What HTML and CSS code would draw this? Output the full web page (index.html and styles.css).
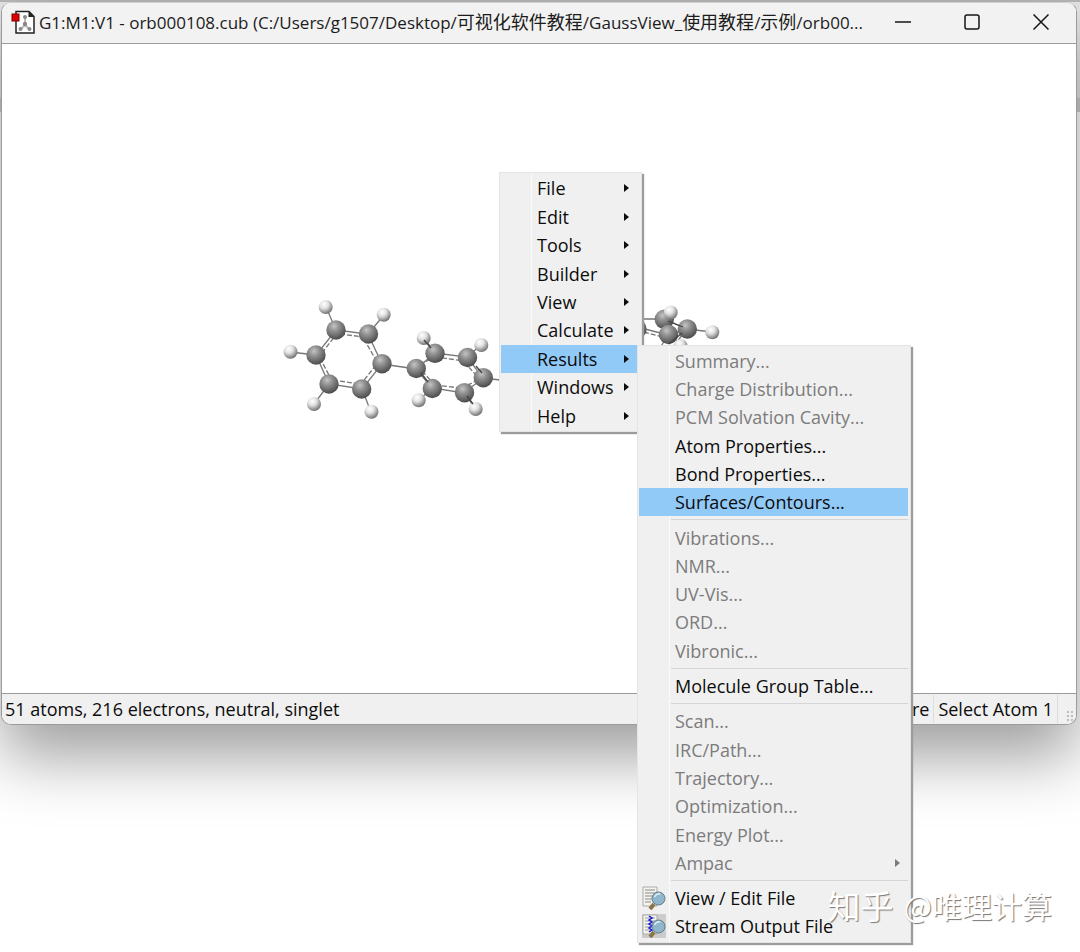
FILE: index.html
```html
<!DOCTYPE html>
<html lang="zh-CN">
<head>
<meta charset="UTF-8">
<meta name="viewport" content="width=device-width, initial-scale=1.0">
<title>G1:M1:V1 - orb000108.cub</title>
<link rel="stylesheet" href="styles.css">
</head>
<body>
<div class="backdrop"></div>
<main class="window">
  <header class="titlebar">
    <svg class="app-icon" viewBox="0 0 24 24" width="24" height="24" aria-hidden="true">
      <path d="M5 1.500h13l5 5v16.500H5z" fill="#fff" stroke="#222" stroke-width="1.500"/>
      <path d="M17.500 1v6h5.500z" fill="#222"/>
      <path d="M14 7v8M14 15l-4 4M14 15l4 4" stroke="#bbb" stroke-width="2"/>
      <g fill="#888"><circle cx="14" cy="7" r="2"/><circle cx="14" cy="14" r="2.200"/><circle cx="9.500" cy="19" r="2"/><circle cx="18.500" cy="19" r="2"/></g>
      <rect x="1" y="4" width="7" height="7" fill="#e00000" stroke="#7a0000"/>
    </svg>
    <h1>G1:M1:V1 - orb000108.cub (C:/Users/g1507/Desktop/<span class="cjk">可视化软件教程</span>/GaussView_<span class="cjk">使用教程</span>/<span class="cjk">示例</span>/orb00...</h1>
    <div class="controls">
      <button type="button" aria-label="Minimize"><svg viewBox="0 0 16 16"><path d="M0 8h16"/></svg></button>
      <button type="button" aria-label="Maximize"><svg viewBox="0 0 16 16"><rect x="1" y="1" width="14" height="14" rx="2"/></svg></button>
      <button type="button" aria-label="Close"><svg viewBox="0 0 16 16"><path d="M.5.5l15 15M15.500.5l-15 15"/></svg></button>
    </div>
  </header>

  <svg class="canvas" viewBox="2 44 1074 649" role="img" aria-label="Molecule">
    <defs>
      <radialGradient id="carbon" cx=".4" cy=".3" r=".75">
        <stop offset="0" stop-color="#c4c4c4"/><stop offset=".35" stop-color="#919191"/><stop offset="1" stop-color="#444"/>
      </radialGradient>
      <radialGradient id="hydrogen" cx=".38" cy=".3" r=".75">
        <stop offset="0" stop-color="#fff"/><stop offset=".4" stop-color="#e2e2e2"/><stop offset="1" stop-color="#666"/>
      </radialGradient>
    </defs>
    <g class="bonds">
      <path d="M326 307L336 330M384 315L368 334M290 352L316 355M314 404L329 384M371 412L362 389"/>
      <path d="M336 330L368 334L382 364L362 389L329 384L316 355zM382 364L416 369"/>
      <path d="M416 369L435 353L467 357L483 378L464 393L432 388zM424 338L435 353M481 345L467 357M419 400L432 388M476 409L464 393M483 378L500 380"/>
      <path d="M636 319L664 319L687 329L712 332M641 328L668 335L687 329M671 312L664 319M681 343L668 335M664 319L668 335M668 335L660 348M687 329L672 348"/>
    </g>
    <g class="bonds dashed">
      <path d="M340 334L364 337M364 339L377 362M376 365L361 384M333 380L360 384M332 381L320 358M322 353L335 336"/>
      <path d="M435 357L465 361M464 362L478 377M478 380L462 388M435 385L460 388M435 385L421 370M420 365L434 357M644 332L666 338"/>
    </g>
    <g fill="url(#hydrogen)">
      <circle cx="325.700" cy="307" r="7"/><circle cx="383.700" cy="314.700" r="7"/><circle cx="290.500" cy="351.700" r="7"/>
      <circle cx="314" cy="404" r="7"/><circle cx="371.500" cy="411.700" r="7"/><circle cx="423.700" cy="338" r="7"/>
      <circle cx="481.300" cy="345" r="7"/><circle cx="418.700" cy="400.300" r="7"/><circle cx="475.700" cy="409" r="7"/>
      <circle cx="712.300" cy="332.300" r="7"/>
    </g>
    <g fill="url(#carbon)">
      <circle cx="336" cy="330" r="9.700"/><circle cx="368.500" cy="334" r="9.700"/><circle cx="316" cy="355" r="9.700"/>
      <circle cx="382" cy="363.700" r="9.700"/><circle cx="329" cy="384" r="9.700"/><circle cx="361.700" cy="389" r="9.700"/>
      <circle cx="416.300" cy="368.500" r="9.700"/><circle cx="435" cy="353.300" r="9.700"/><circle cx="467.500" cy="357.500" r="9.700"/>
      <circle cx="483.300" cy="377.700" r="9.700"/><circle cx="432.300" cy="388.500" r="9.700"/><circle cx="464.500" cy="392.700" r="9.700"/>
      <circle cx="637" cy="329" r="9.700"/><circle cx="664.300" cy="319.300" r="9.700"/><circle cx="668.500" cy="334.500" r="9.700"/>
      <circle cx="687.300" cy="329" r="9.700"/>
    </g>
    <g fill="url(#hydrogen)"><circle cx="670.700" cy="312.500" r="7"/><circle cx="680.700" cy="346" r="7"/></g>
    <path class="near-bond" d="M668 321L683 327M669 344L682 333"/>
    <path class="near-bond" d="M476 366L482 373M424 340L431 348M467 396L473 404M421 373L428 382"/>
  </svg>

  <footer class="statusbar">
    <span class="summary">51 atoms, 216 electrons, neutral, singlet</span>
    <span class="pane">re</span>
    <span class="pane">Select Atom 1</span>
    <svg class="grip" viewBox="0 0 10 10" width="10" height="10" aria-hidden="true"><path d="M7 0h2v2H7zM3 4h2v2H3zM7 4h2v2H7zM3 8h2v2H3zM7 8h2v2H7zM3 0h2v2H3z"/></svg>
  </footer>
</main>

<ul class="menu main-menu">
  <li><button type="button" class="parent">File</button></li>
  <li><button type="button" class="parent">Edit</button></li>
  <li><button type="button" class="parent">Tools</button></li>
  <li><button type="button" class="parent">Builder</button></li>
  <li><button type="button" class="parent">View</button></li>
  <li><button type="button" class="parent">Calculate</button></li>
  <li class="open">
    <button type="button" class="parent active" aria-expanded="true">Results</button>
    <ul class="menu submenu">
      <li><button type="button" disabled>Summary...</button></li>
      <li><button type="button" disabled>Charge Distribution...</button></li>
      <li><button type="button" disabled>PCM Solvation Cavity...</button></li>
      <li><button type="button">Atom Properties...</button></li>
      <li><button type="button">Bond Properties...</button></li>
      <li><button type="button" class="active">Surfaces/Contours...</button></li>
      <li class="separator" role="separator"></li>
      <li><button type="button" disabled>Vibrations...</button></li>
      <li><button type="button" disabled>NMR...</button></li>
      <li><button type="button" disabled>UV-Vis...</button></li>
      <li><button type="button" disabled>ORD...</button></li>
      <li><button type="button" disabled>Vibronic...</button></li>
      <li class="separator" role="separator"></li>
      <li><button type="button">Molecule Group Table...</button></li>
      <li class="separator" role="separator"></li>
      <li><button type="button" disabled>Scan...</button></li>
      <li><button type="button" disabled>IRC/Path...</button></li>
      <li><button type="button" disabled>Trajectory...</button></li>
      <li><button type="button" disabled>Optimization...</button></li>
      <li><button type="button" disabled>Energy Plot...</button></li>
      <li><button type="button" class="parent" disabled>Ampac</button></li>
      <li class="separator" role="separator"></li>
      <li><button type="button" class="with-icon">
        <svg class="item-icon" viewBox="0 0 24 24" aria-hidden="true">
          <path d="M1 1h14v19H1z" fill="#f4f4ee" stroke="#aaa"/>
          <path d="M3 4h10M3 7h10M3 10h8M3 13h7M3 16h6" stroke="#888"/>
          <path d="M12 18l-4 5" stroke="#8b7445" stroke-width="4"/>
          <circle cx="16.500" cy="12.500" r="6.500" fill="#8fb6ca" stroke="#687f8a"/>
          <path d="M12.500 11q2-4 6-3" fill="none" stroke="#d8edf5" stroke-width="1.500"/>
        </svg>View / Edit File</button></li>
      <li><button type="button" class="with-icon">
        <svg class="item-icon" viewBox="0 0 24 24" aria-hidden="true">
          <path d="M0 0h24v24H0z" fill="#ccc"/>
          <path d="M1 1h14v19H1z" fill="#f4f4ee" stroke="#aaa"/>
          <path d="M3 4h10M3 7h10M3 10h8M3 13h7M3 16h6" stroke="#999"/>
          <path d="M7 2l3 2-3 2 3 2-3 2 3 2-3 2 3 2-3 2" fill="none" stroke="#1717d8" stroke-width="1.500"/>
          <path d="M12 18l-4 5" stroke="#8b7445" stroke-width="4"/>
          <circle cx="16.500" cy="12.500" r="6.500" fill="#8fb6ca" stroke="#687f8a"/>
          <path d="M12.500 11q2-4 6-3" fill="none" stroke="#d8edf5" stroke-width="1.500"/>
        </svg>Stream Output File</button></li>
    </ul>
  </li>
  <li><button type="button" class="parent">Windows</button></li>
  <li><button type="button" class="parent">Help</button></li>
</ul>

<div class="watermark"><span class="site">知乎</span><span>@唯理计算</span></div>
</body>
</html>
```
FILE: styles.css
```css
:root{--panel:#f0f0f0;--highlight:#91c9f7;--line:#9b9b9b;--text:#0c0c0c;--muted:#7c7c7c}
*{box-sizing:border-box;margin:0;padding:0}
body{position:relative;min-height:100vh;padding:2px 3px 0 1px;overflow:hidden;background:#fff;color:var(--text);font:18px/28px "Open Sans","Noto Sans CJK SC",sans-serif}
button{font:inherit;color:inherit;background:none;border:0}

.backdrop{position:absolute;top:0;left:0;right:0;height:112px;background:linear-gradient(#b8b8b8 2px,#e6e6e6 2px,#e6e6e6 98px,#cfcfcf 98px)}
.window{position:relative;display:flex;flex-direction:column;border:1px solid var(--line);border-top-color:#d0d0d0;border-radius:10px;overflow:hidden;background:#fff;box-shadow:0 32px 64px rgba(0,0,0,.38)}

.titlebar{display:flex;align-items:center;height:41px;padding:0 1px 2px 9px;background:#f2f2f2;border-bottom:1px solid var(--line)}
.titlebar h1{flex:1;min-width:0;overflow:hidden;white-space:nowrap;font-size:17px;font-weight:400;color:#1c1c1c}
.cjk{font-size:18px}
.app-icon{flex:none;margin-right:4px}
.controls{display:flex;flex:none}
.controls button{display:grid;place-items:center;width:69px;height:38px}
.controls svg{width:16px;height:16px;fill:none;stroke:#151515;stroke-width:1.500}

.canvas{display:block;width:100%}
.bonds{fill:none;stroke:#777;stroke-width:1.300}
.dashed{stroke-dasharray:5 2}
.near-bond{fill:none;stroke:#444;stroke-width:1.300}

.statusbar{display:flex;align-items:center;height:31px;padding:0 2px 0 3px;background:var(--panel);border-top:1px solid var(--line);white-space:nowrap}
.summary{flex:1}
.pane{padding:0 4px;border-right:1px solid #dcdcdc}
.grip{align-self:flex-end;margin:0 0 3px 6px;fill:#bdbdbd}

.menu{position:absolute;display:flex;flex-direction:column;list-style:none;padding:1px;border:1px solid #e4e4e4;background:linear-gradient(90deg,transparent 31px,#fafafa 31px,#fafafa 32px,transparent 32px) var(--panel);box-shadow:2px 2px 1px #9c9c9c}
.main-menu{top:172px;left:499px;width:143px;min-height:260px;padding-right:4px}
.submenu{top:0;left:100%;width:274px;min-height:598px;padding-right:2px}
.menu li{display:flex;flex:1}
.menu .open{position:relative}
.menu .separator{flex:none;height:7px;padding:3px 0;margin-left:32px;background:#d5d5d5 content-box}
.menu button{position:relative;flex:1;padding-left:36px;text-align:left;white-space:nowrap}
.menu button:disabled{color:var(--muted)}
.menu .active{background:var(--highlight)}
.parent::after{content:"";position:absolute;top:50%;right:8px;margin-top:-4px;border:4px solid transparent;border-left:5px solid currentColor;border-right:0}
.menu .with-icon{display:flex;align-items:center;padding-left:3px}
.item-icon{flex:none;width:24px;height:24px;margin-right:9px}

.watermark{position:absolute;right:28px;bottom:24px;display:flex;align-items:center;gap:10px;font:30px/46px "Noto Sans CJK SC",sans-serif;color:#fff;text-shadow:1px 1px 1px #777;white-space:nowrap}
.site{font-size:33px}
```
